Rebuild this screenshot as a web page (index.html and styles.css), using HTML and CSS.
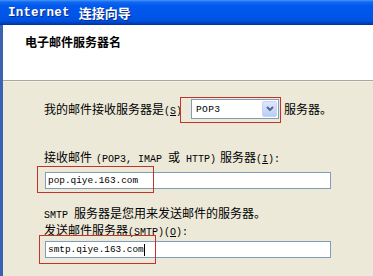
FILE: index.html
```html
<!DOCTYPE html>
<html lang="zh-CN">
<head>
<meta charset="utf-8">
<title>Internet 连接向导</title>
<link rel="stylesheet" href="styles.css">
</head>
<body>
<div class="titlebar"><span class="t-lat">Internet</span><span class="t-cjk">连接向导</span></div>
<div class="window">
  <div class="header"><h1 class="header-title">电子邮件服务器名</h1></div>
  <div class="divider"></div>
  <div class="content">
    <div class="row-server">
      <span class="label">我的邮件接收服务器是<span class="m">(<u>S</u>)</span></span>
      <div class="select"><span class="select-value">POP3</span><span class="select-btn"><svg width="8" height="6" viewBox="0 0 8 6"><path d="M1 1 L4 4 L7 1" fill="none" stroke="#4d6185" stroke-width="1.8"/></svg></span></div>
      <span class="label after">服务器。</span>
    </div>
    <div class="label l-in">接收邮件<span class="m gap-l">(POP3, IMAP </span>或<span class="m gap-r"> HTTP)</span>服务器<span class="m">(<u>I</u>):</span></div>
    <div class="field f-pop">pop.qiye.163.com</div>
    <div class="label l-smtp"><span class="m">SMTP </span>服务器是您用来发送邮件的服务器。</div>
    <div class="label l-out">发送邮件服务器<span class="m">(SMTP)(<u>O</u>):</span></div>
    <div class="field f-smtp">smtp.qiye.163.com<span class="caret"></span></div>
    <div class="mark mark-1"></div>
    <div class="mark mark-2"></div>
    <div class="mark mark-3"></div>
  </div>
</div>
</body>
</html>
```
FILE: styles.css
```css
html, body {
  margin: 0;
  padding: 0;
}
body {
  width: 373px;
  height: 276px;
  overflow: hidden;
  background: #ece9d8;
  font-family: "Noto Sans CJK SC", sans-serif;
  font-size: 12px;
  color: #000;
}
.titlebar {
  height: 25px;
  box-sizing: border-box;
  padding-left: 8px;
  display: flex;
  align-items: center;
  gap: 9px;
  color: #fff;
  font-weight: bold;
  background: linear-gradient(#4a96ff 0, #1168f0 2px, #0058ee 6px, #0055e8 16px, #0050dc 21px, #0042c0 23px, #00309c 25px);
}
.t-lat {
  font-family: "Liberation Mono", monospace;
  font-size: 12.5px;
  letter-spacing: 0.2px;
  text-shadow: 1px 1px 0 #0a2a8a;
}
.t-cjk {
  font-size: 13px;
  text-shadow: 1px 1px 0 #0a2a8a;
}
.window {
  height: 251px;
  border-left: 3px solid #3a62b0;
  display: flex;
  flex-direction: column;
}
.header {
  background: #fff;
  border-bottom: 1px solid #aca899;
  padding: 9px 0 0 22px;
  height: 46px;
}
.header-title {
  margin: 0;
  font-size: 12px;
  font-weight: bold;
  line-height: 16px;
}
.divider {
  height: 1px;
  background: #f4f2ea;
}
.content {
  position: relative;
  flex: 1;
  padding-left: 41px;
}
.m {
  font-family: "Liberation Mono", monospace;
  font-size: 10px;
}
.gap-l {
  margin-left: 4px;
}
.gap-r {
  margin-right: 4px;
}
.label {
  line-height: 14px;
  height: 14px;
  white-space: nowrap;
}
.row-server {
  display: flex;
  align-items: center;
  height: 22px;
  margin-top: 16px;
}
.select {
  width: 88px;
  height: 20px;
  box-sizing: border-box;
  margin-left: 9px;
  border: 1px solid #7f9db9;
  background: #fff;
  display: flex;
  align-items: center;
  padding-left: 4px;
  font-family: "Liberation Mono", monospace;
  font-size: 9.6px;
  letter-spacing: 0.3px;
}
.select-btn {
  margin-left: auto;
  margin-right: 1px;
  width: 15px;
  height: 16px;
  box-sizing: border-box;
  border: 1px solid #c3d3fd;
  border-radius: 2px;
  background: linear-gradient(#dfe8fd, #b9cdf6);
  display: flex;
  align-items: center;
  justify-content: center;
}
.after {
  margin-left: 5px;
}
.l-in {
  margin-top: 30px;
}
.field {
  width: 286px;
  height: 17px;
  box-sizing: border-box;
  margin-left: 1px;
  border: 1px solid #7f9db9;
  background: #fff;
  padding-left: 2px;
  display: flex;
  align-items: center;
  font-family: "Liberation Mono", monospace;
  font-size: 9.4px;
}
.f-pop {
  margin-top: 8px;
}
.l-smtp {
  margin-top: 15px;
  line-height: 17px;
  height: 17px;
}
.l-out {
  line-height: 17px;
  height: 17px;
}
.f-smtp {
  margin-top: 3px;
}
.caret {
  width: 1px;
  height: 12px;
  background: #000;
  margin-left: 0;
}
.mark {
  position: absolute;
  border: 1px solid #c4322c;
  box-sizing: border-box;
}
.mark-1 {
  left: 177px;
  top: 15px;
  width: 101px;
  height: 26px;
}
.mark-2 {
  left: 34px;
  top: 84px;
  width: 117px;
  height: 27px;
}
.mark-3 {
  left: 36px;
  top: 153px;
  width: 117px;
  height: 29px;
}
```
